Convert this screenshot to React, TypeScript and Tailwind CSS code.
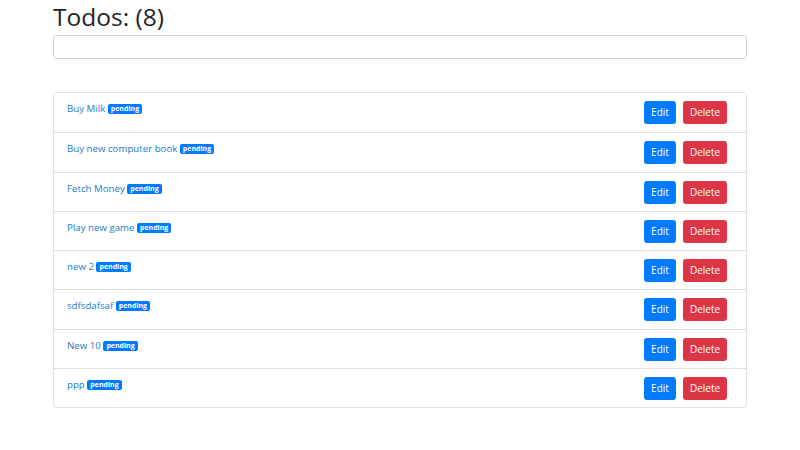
import React from "react";

const todos = [
  "Buy Milk",
  "Buy new computer book",
  "Fetch Money",
  "Play new game",
  "new 2",
  "sdfsdafsaf",
  "New 10",
  "ppp",
];

const App = () => {
  return (
    <div className="w-[800px] h-[450px] bg-white" style={{ fontFamily: '"Open Sans", "Noto Sans", sans-serif' }}>
      <div className="mx-[53px] pt-[1px]">
        <h1 className="text-[24.5px] leading-[32px] text-[#212529] font-normal">Todos: ({todos.length})</h1>
        <input
          type="text"
          className="mt-[2px] block w-full h-[24px] border border-[#ced4da] rounded-[3px] outline-none"
        />
        <ul className="mt-[33px] border border-[#dfdfdf] rounded-[3px]">
          {todos.map((todo, i) => (
            <li
              key={i}
              className={
                "flex justify-between items-start h-[39.3px] pl-[13px] pr-[19px] pt-[8px] " +
                (i > 0 ? "border-t border-[#dfdfdf]" : "")
              }
            >
              <span className="text-[9.7px] leading-[15px] text-[#1a7bcc]">
                {todo}{" "}
                <span className="inline-block align-[1px] bg-[#007bff] text-white text-[7px] leading-[10px] font-bold px-[3px] rounded-[2px]">
                  pending
                </span>
              </span>
              <div className="flex gap-[7px]">
                <button className="h-[23px] w-[32px] bg-[#007bff] text-white text-[10px] rounded-[3px]">Edit</button>
                <button className="h-[23px] w-[44px] bg-[#dc3545] text-white text-[10px] rounded-[3px]">Delete</button>
              </div>
            </li>
          ))}
        </ul>
      </div>
    </div>
  );
};

export default App;
